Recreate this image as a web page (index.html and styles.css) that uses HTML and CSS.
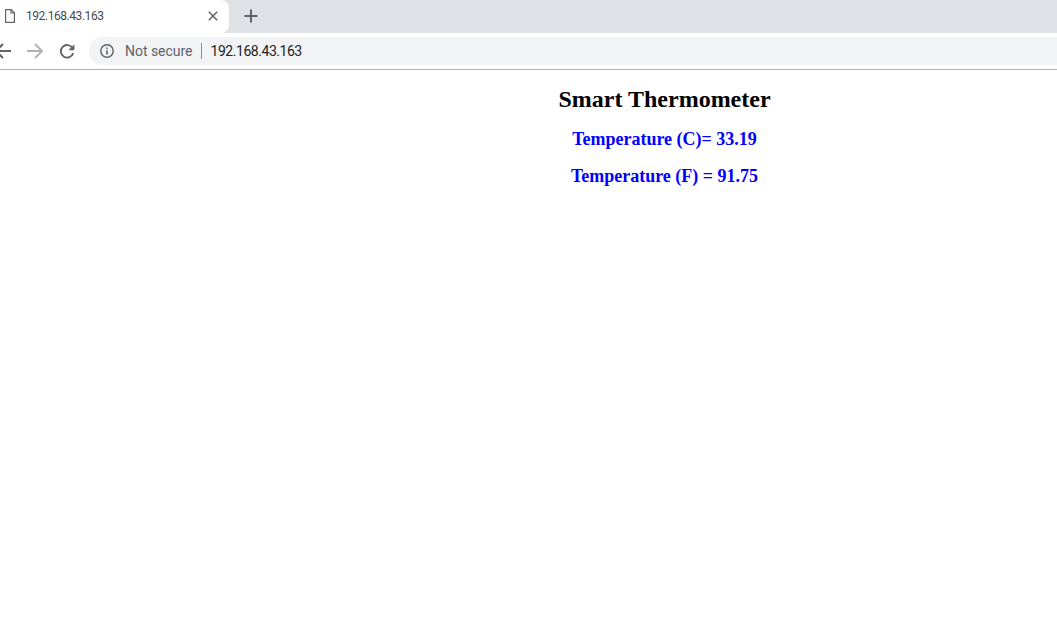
FILE: index.html
```html
<!DOCTYPE html>
<html lang="en">
<head>
<meta charset="utf-8">
<title>192.168.43.163</title>
<link rel="stylesheet" href="styles.css">
</head>
<body>
<header class="browser">
  <div class="tabstrip">
    <div class="tab">
      <svg class="file-icon" width="16" height="16" viewBox="0 0 16 16" fill="none" stroke="#5f6368" stroke-width="1.2"><path d="M3.6 1.6h5.6l3.2 3.2v9.6H3.6z"/><path d="M9 1.6v3.4h3.4"/></svg>
      <span class="tab-title">192.168.43.163</span>
      <svg class="tab-close" width="10" height="10" viewBox="0 0 10 10" stroke="#5f6368" stroke-width="1.5"><path d="M.8.8l8.4 8.4M9.2.8L.8 9.2"/></svg>
    </div>
    <svg class="new-tab" width="14" height="14" viewBox="0 0 14 14" stroke="#5f6368" stroke-width="2"><path d="M7 .5v13M.5 7h13"/></svg>
  </div>
  <div class="toolbar">
    <svg class="nav back" width="16" height="16" viewBox="0 0 16 16" fill="none" stroke="#5f6368" stroke-width="2"><path d="M16 8H1M8 1L1 8l7 7"/></svg>
    <svg class="nav forward" width="16" height="16" viewBox="0 0 16 16" fill="none" stroke="#b1b3b6" stroke-width="2"><path d="M0 8h15M8 1l7 7-7 7"/></svg>
    <svg class="nav reload" width="16" height="16" viewBox="0 0 16 16" fill="none"><path d="M13.6 5.2A6.3 6.3 0 1 0 14.2 10" stroke="#5f6368" stroke-width="1.9"/><path d="M15.4 1.2v6h-6z" fill="#5f6368"/></svg>
    <div class="omnibox">
      <svg class="info" width="14" height="14" viewBox="0 0 14 14" fill="none"><circle cx="7" cy="7" r="6.2" stroke="#5f6368" stroke-width="1.4"/><path d="M7 6.2v4.2M7 3.4v1.6" stroke="#5f6368" stroke-width="1.6"/></svg>
      <span class="secure">Not secure</span>
      <span class="divider"></span>
      <span class="url">192.168.43.163</span>
    </div>
  </div>
</header>
<main class="page">
  <h2 class="title">Smart Thermometer</h2>
  <h3 class="reading">Temperature (C)= 33.19</h3>
  <h3 class="reading">Temperature (F) = 91.75</h3>
</main>
</body>
</html>
```
FILE: styles.css
```css
html, body { margin: 0; height: 100%; background: #fff; overflow: hidden; }
body { font-family: "Roboto", "Liberation Sans", sans-serif; }

.browser { border-bottom: 1px solid #b3b3b3; }

.tabstrip { height: 33px; background: #dee1e6; display: flex; align-items: center; }
.tab {
  width: 229px; height: 33px; box-sizing: border-box; background: #fff;
  border-bottom-right-radius: 8px; border-top-right-radius: 8px;
  display: flex; align-items: center; padding: 0 11px 2px 2px;
}
.file-icon { flex: none; }
.tab-title { margin-left: 8px; font-size: 12px; letter-spacing: -0.44px; color: #45494f; flex: 1; }
.tab-close { flex: none; }
.new-tab { margin-left: 15px; margin-bottom: 2px; }

.toolbar { height: 36px; background: #fff; display: flex; align-items: center; }
.nav { flex: none; }
.back { margin-left: -5px; }
.forward { margin-left: 16px; }
.reload { margin-left: 16px; }

.omnibox {
  flex: 1; height: 28px; margin-left: 14px; margin-right: -20px;
  background: #f1f3f4; border-radius: 14px;
  display: flex; align-items: center; padding-left: 11px; font-size: 14px;
}
.info { flex: none; }
.secure { margin-left: 11px; letter-spacing: -0.03px; color: #5f6368; }
.divider { width: 1px; height: 16px; background: #8f9194; margin: 0 8px 0 9px; }
.url { color: #202124; letter-spacing: -0.45px; }

.page { padding: 16px 0 0 272px; text-align: center; font-family: "Liberation Serif", "Times New Roman", serif; }
.title { margin: 0; font-size: 24px; line-height: 27px; color: #000; }
.reading { margin: 16px 0 0; font-size: 18px; line-height: 21px; color: #00f; }
.reading + .reading { margin-top: 16px; }
```
